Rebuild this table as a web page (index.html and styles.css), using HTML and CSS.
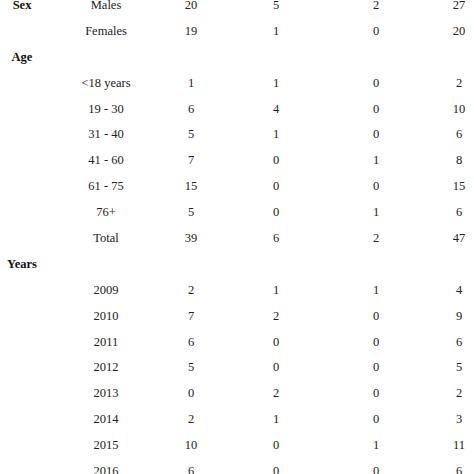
FILE: index.html
```html
<!DOCTYPE html>
<html>
<head>
<meta charset="utf-8">
<link rel="stylesheet" href="styles.css">
</head>
<body>
<div class="table">
  <div class="row"><span class="c1 head">Sex</span><span class="c2">Males</span><span class="c3">20</span><span class="c4">5</span><span class="c5">2</span><span class="c6">27</span></div>
  <div class="row"><span class="c1"></span><span class="c2">Females</span><span class="c3">19</span><span class="c4">1</span><span class="c5">0</span><span class="c6">20</span></div>
  <div class="row"><span class="c1 head">Age</span><span class="c2"></span><span class="c3"></span><span class="c4"></span><span class="c5"></span><span class="c6"></span></div>
  <div class="row"><span class="c1"></span><span class="c2">&lt;18 years</span><span class="c3">1</span><span class="c4">1</span><span class="c5">0</span><span class="c6">2</span></div>
  <div class="row"><span class="c1"></span><span class="c2">19 - 30</span><span class="c3">6</span><span class="c4">4</span><span class="c5">0</span><span class="c6">10</span></div>
  <div class="row"><span class="c1"></span><span class="c2">31 - 40</span><span class="c3">5</span><span class="c4">1</span><span class="c5">0</span><span class="c6">6</span></div>
  <div class="row"><span class="c1"></span><span class="c2">41 - 60</span><span class="c3">7</span><span class="c4">0</span><span class="c5">1</span><span class="c6">8</span></div>
  <div class="row"><span class="c1"></span><span class="c2">61 - 75</span><span class="c3">15</span><span class="c4">0</span><span class="c5">0</span><span class="c6">15</span></div>
  <div class="row"><span class="c1"></span><span class="c2">76+</span><span class="c3">5</span><span class="c4">0</span><span class="c5">1</span><span class="c6">6</span></div>
  <div class="row"><span class="c1"></span><span class="c2">Total</span><span class="c3">39</span><span class="c4">6</span><span class="c5">2</span><span class="c6">47</span></div>
  <div class="row"><span class="c1 head">Years</span><span class="c2"></span><span class="c3"></span><span class="c4"></span><span class="c5"></span><span class="c6"></span></div>
  <div class="row"><span class="c1"></span><span class="c2">2009</span><span class="c3">2</span><span class="c4">1</span><span class="c5">1</span><span class="c6">4</span></div>
  <div class="row"><span class="c1"></span><span class="c2">2010</span><span class="c3">7</span><span class="c4">2</span><span class="c5">0</span><span class="c6">9</span></div>
  <div class="row"><span class="c1"></span><span class="c2">2011</span><span class="c3">6</span><span class="c4">0</span><span class="c5">0</span><span class="c6">6</span></div>
  <div class="row"><span class="c1"></span><span class="c2">2012</span><span class="c3">5</span><span class="c4">0</span><span class="c5">0</span><span class="c6">5</span></div>
  <div class="row"><span class="c1"></span><span class="c2">2013</span><span class="c3">0</span><span class="c4">2</span><span class="c5">0</span><span class="c6">2</span></div>
  <div class="row"><span class="c1"></span><span class="c2">2014</span><span class="c3">2</span><span class="c4">1</span><span class="c5">0</span><span class="c6">3</span></div>
  <div class="row"><span class="c1"></span><span class="c2">2015</span><span class="c3">10</span><span class="c4">0</span><span class="c5">1</span><span class="c6">11</span></div>
  <div class="row"><span class="c1"></span><span class="c2">2016</span><span class="c3">6</span><span class="c4">0</span><span class="c5">0</span><span class="c6">6</span></div>
</div>
</body>
</html>
```
FILE: styles.css
```css
html, body {
  margin: 0;
  padding: 0;
  background: #ffffff;
  overflow: hidden;
  width: 474px;
  height: 474px;
}
.table {
  margin-top: -7px;
  font-family: "Liberation Serif", "Times New Roman", serif;
  font-size: 12.5px;
  color: #222222;
}
.row {
  display: grid;
  grid-template-columns: 44px 124px 46px 124px 76px 60px;
  height: 25.9px;
  line-height: 25.9px;
  text-align: center;
  white-space: nowrap;
}
.c6 {
  padding-left: 30px;
}
.head {
  font-weight: bold;
  color: #111111;
}
```
